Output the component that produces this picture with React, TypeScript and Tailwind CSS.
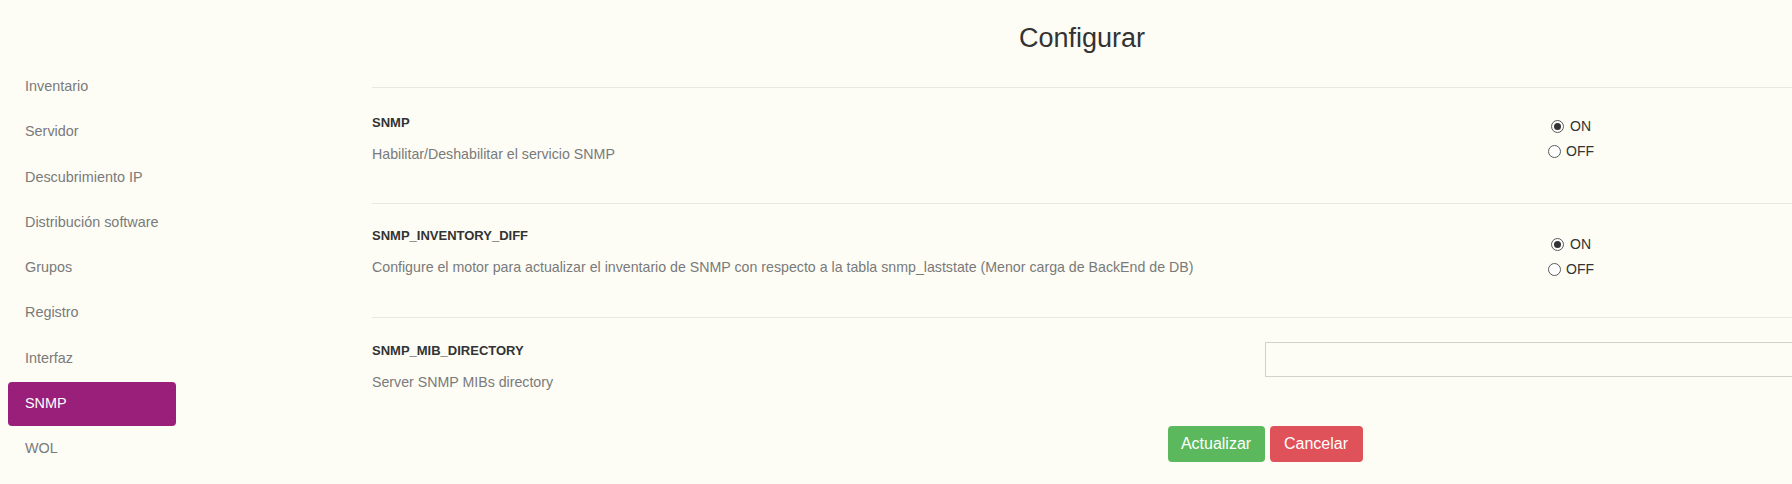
import React from "react";

const menu = [
  "Inventario",
  "Servidor",
  "Descubrimiento IP",
  "Distribución software",
  "Grupos",
  "Registro",
  "Interfaz",
  "SNMP",
  "WOL",
];

function Radio({ checked, label, shift }: { checked?: boolean; label: string; shift?: boolean }) {
  return (
    <label className={`flex items-center h-[25px] ${shift ? "pl-[3px]" : ""}`}>
      <span className="flex items-center justify-center w-[13px] h-[13px] rounded-full border border-[#5a5a5a] bg-white">
        {checked && <span className="w-[7px] h-[7px] rounded-full bg-[#333]" />}
      </span>
      <span className={`${shift ? "ml-[6px]" : "ml-[5px]"} text-[14px] text-[#333]`}>{label}</span>
    </label>
  );
}

function Row({
  title,
  desc,
  pt,
  h,
  border,
  children,
  leftWidth,
  rightPt,
}: {
  title: string;
  desc: string;
  pt: string;
  h: string;
  border?: boolean;
  children: React.ReactNode;
  leftWidth: string;
  rightPt: string;
}) {
  return (
    <div className={`flex ${h} ${border ? "border-t border-[#e8e8e2]" : ""}`}>
      <div className={`${leftWidth} shrink-0 ${pt}`}>
        <div className="h-[20px] leading-[20px] text-[13px] font-bold text-[#333]">{title}</div>
        <div className="mt-[11px] h-[20px] leading-[20px] text-[14.2px] text-[#7a7a7a]">{desc}</div>
      </div>
      <div className={`flex-1 ${rightPt}`}>{children}</div>
    </div>
  );
}

export default function App() {
  return (
    <div className="w-full h-[484px] bg-[#fdfdf6] overflow-hidden flex font-['Liberation_Sans',Arial,sans-serif]">
      <aside className="w-[372px] shrink-0 pt-[65px] flex flex-col gap-[1.25px]">
        {menu.map((m) => (
          <div
            key={m}
            className={`ml-[8px] w-[168px] h-[44px] pl-[17px] flex items-center text-[14.4px] rounded-[4px] ${
              m === "SNMP" ? "bg-[#991f7b] text-white" : "text-[#7a7a7a]"
            }`}
          >
            {m}
          </div>
        ))}
      </aside>

      <main className="w-[1786px] shrink-0">
        <div className="w-[1420px] h-[87px] pb-[10px] flex items-center justify-center">
          <h3 className="text-[27px] text-[#333]">Configurar</h3>
        </div>

        <Row
          title="SNMP"
          desc="Habilitar/Deshabilitar el servicio SNMP"
          pt="pt-[25px]"
          h="h-[116px]"
          border
          leftWidth="w-[1176px]"
          rightPt="pt-[26px]"
        >
          <Radio checked label="ON" shift />
          <Radio label="OFF" />
        </Row>

        <Row
          title="SNMP_INVENTORY_DIFF"
          desc="Configure el motor para actualizar el inventario de SNMP con respecto a la tabla snmp_laststate (Menor carga de BackEnd de DB)"
          pt="pt-[22px]"
          h="h-[114px]"
          border
          leftWidth="w-[1176px]"
          rightPt="pt-[28px]"
        >
          <Radio checked label="ON" shift />
          <Radio label="OFF" />
        </Row>

        <Row
          title="SNMP_MIB_DIRECTORY"
          desc="Server SNMP MIBs directory"
          pt="pt-[23px]"
          h="h-[109px]"
          border
          leftWidth="w-[893px]"
          rightPt="pt-[24px]"
        >
          <input
            type="text"
            className="w-full h-[35px] border border-[#d2d2cc] bg-[#fdfdf6] px-3 text-[14px] outline-none"
          />
        </Row>

        <div className="flex justify-center gap-[5px]">
          <button className="w-[97px] h-[36px] rounded-[4px] bg-[#5cb85c] text-white text-[16px]">
            Actualizar
          </button>
          <button className="w-[93px] h-[36px] rounded-[4px] bg-[#e05259] text-white text-[16px]">
            Cancelar
          </button>
        </div>
      </main>
    </div>
  );
}
